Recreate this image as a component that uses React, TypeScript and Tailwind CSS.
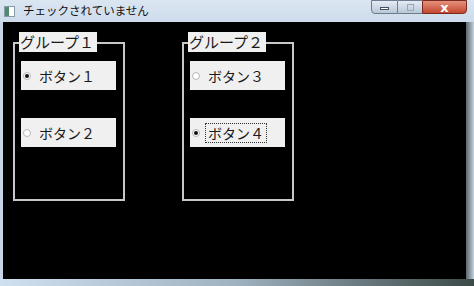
const jp = { fontFamily: '"Noto Sans CJK JP", "Noto Sans", sans-serif' }

function Radio({ label, checked, focused }: { label: string; checked?: boolean; focused?: boolean }) {
  return (
    <div className="flex h-[29px] w-[95px] items-center bg-[#f0f0f0] pl-[2px]">
      <span className="flex h-[8px] w-[8px] items-center justify-center rounded-full border border-[#b8b8b8] bg-white">
        {checked && <span className="h-[4px] w-[4px] rounded-full bg-[#111]" />}
      </span>
      <span
        className={
          'ml-[6px] px-[2px] text-[14px] leading-[18px] text-[#1a1a1a] ' +
          (focused ? 'outline outline-1 outline-dotted outline-[#333]' : '')
        }
      >
        {label}
      </span>
    </div>
  )
}

function Group({ title, children }: { title: string; children: React.ReactNode }) {
  return (
    <div className="relative h-[159px] w-[112px] border-2 border-[#c8c8c8] pl-[6px] pt-[17px]">
      <div className="absolute -top-[12px] left-[4px] flex h-[20px] w-[78px] items-center bg-[#f0f0f0] pl-[1px] text-[15px] text-[#1a1a1a]">
        {title}
      </div>
      <div className="flex flex-col gap-[28px]">{children}</div>
    </div>
  )
}

export default function App() {
  return (
    <div className="flex h-[286px] w-[474px] flex-col overflow-hidden bg-[#cfdceb]" style={jp}>
      {/* title bar */}
      <div className="relative flex h-[22px] shrink-0 items-center bg-gradient-to-b from-[#dbe6f2] to-[#cddbea] pl-[4px]">
        <div className="flex h-[11px] w-[11px] border border-[#8a9aa8] bg-white">
          <div className="w-[4px] bg-[#4f8a6a]" />
        </div>
        <span className="ml-[8px] text-[11.5px] text-[#111]">チェックされていません</span>
        <div className="absolute left-[371px] top-0 flex h-[14px]">
          <div className="flex w-[27px] items-center justify-center rounded-bl-[4px] border border-[#6d7c8c] bg-gradient-to-b from-[#e4ebf3] to-[#b9c8d8]">
            <div className="mt-[3px] h-[3px] w-[9px] border border-[#45505c] bg-white" />
          </div>
          <div className="flex w-[24px] items-center justify-center border-y border-[#6d7c8c] bg-gradient-to-b from-[#e4ebf3] to-[#b9c8d8]">
            <div className="h-[7px] w-[7px] border border-[#9aa6b2]" />
          </div>
          <div className="flex w-[45px] items-center justify-center rounded-br-[4px] border border-[#7a2a20] bg-gradient-to-b from-[#e4917c] to-[#c4452e] text-[13px] font-bold leading-none text-white" style={{ fontFamily: '"DejaVu Sans", sans-serif' }}>
            x
          </div>
        </div>
      </div>

      {/* body */}
      <div className="flex flex-1">
        <div className="w-[3px] bg-[#c6d6e8]" />
        <div className="flex flex-1 items-start gap-[57px] bg-black pl-[10px] pt-[20px]">
          <Group title="グループ１">
            <Radio label="ボタン１" checked />
            <Radio label="ボタン２" />
          </Group>
          <Group title="グループ２">
            <Radio label="ボタン３" />
            <Radio label="ボタン４" checked focused />
          </Group>
        </div>
        <div className="w-[8px] bg-gradient-to-r from-[#5a6670] to-[#c8d4dc]" />
      </div>
      <div className="h-[7px] shrink-0 bg-gradient-to-r from-[#cfe0f0] via-[#9fb2c0] to-[#3c4a48]" />
    </div>
  )
}
